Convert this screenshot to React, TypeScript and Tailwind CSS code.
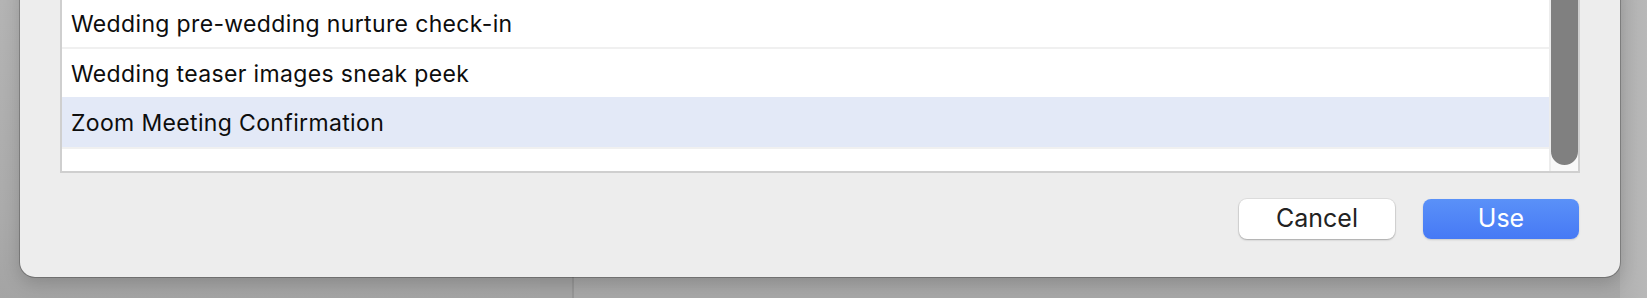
import React from "react";

const rows = [
  { label: "Wedding pre-wedding nurture check-in", selected: false },
  { label: "Wedding teaser images sneak peek", selected: false },
  { label: "Zoom Meeting Confirmation", selected: true },
];

export default function App() {
  return (
    <div
      className="relative flex h-[298px] w-[1647px] flex-col justify-end overflow-hidden bg-[linear-gradient(180deg,#b4b4b4_0%,#ababab_70%,#a4a4a4_100%)] pb-[21px] pl-[20px]"
      style={{ fontFamily: "Inter, 'Noto Sans', sans-serif" }}
    >
      {/* window behind the dialog */}
      <div className="absolute bottom-0 left-[540px] top-0 w-[32px] bg-[#a3a3a3]" />
      <div className="absolute bottom-0 left-[572px] top-0 w-[2px] bg-[#969696]" />
      <div className="absolute bottom-0 left-[574px] right-0 top-0 bg-[linear-gradient(180deg,#b2b2b2_0%,#a9a9a9_70%,#a7a7a7_100%)]" />
      <div className="absolute bottom-0 left-[1620px] right-0 top-0 bg-[linear-gradient(90deg,#b0b0b0_0%,#b8b8b8_100%)]" />

      <div className="relative z-10 flex w-[1600px] flex-col rounded-[15px] bg-[#ededed] px-[40px] pb-[38px] pt-[20px] shadow-[0_0_0_1px_rgba(0,0,0,0.22),0_6px_18px_rgba(0,0,0,0.18)]">
        {/* list */}
        <div className="flex border-2 border-[#cfcfcf] bg-white">
          <div className="flex flex-1 flex-col">
            {rows.map((r, i) => (
              <div
                key={i}
                className={
                  r.selected
                    ? "flex h-[50px] items-center bg-[#e3e9f7] pl-[9px] pt-[3px] text-[23px] tracking-[0.35px] text-[#0d0d0d]"
                    : "flex h-[50px] items-center border-t-2 border-[#f0f0f0] pl-[9px] pt-[2px] text-[23px] tracking-[0.35px] text-[#0d0d0d]"
                }
              >
                {r.label}
              </div>
            ))}
            <div className="h-[24px] border-t-2 border-[#f0f0f0]" />
          </div>
          {/* scrollbar */}
          <div className="flex w-[29px] justify-center border-l-2 border-[#ececec] bg-[#f8f8f8] pb-[6px]">
            <div className="w-[16px] flex-1 rounded-b-full bg-[#808080]" />
          </div>
        </div>

        {/* buttons */}
        <div className="mt-[26px] flex justify-end gap-[28px] pr-[1px]">
          <button className="flex h-[40px] w-[156px] items-center justify-center rounded-[8px] bg-white text-[25px] text-[#222222] shadow-[0_0_0_1px_rgba(0,0,0,0.06),0_1px_2px_rgba(0,0,0,0.25)]">
            Cancel
          </button>
          <button className="flex h-[40px] w-[156px] items-center justify-center rounded-[8px] bg-[linear-gradient(180deg,#5a91f8_0%,#4679f5_100%)] text-[25px] text-white shadow-[0_1px_2px_rgba(0,0,0,0.15)]">
            Use
          </button>
        </div>
      </div>
    </div>
  );
}
